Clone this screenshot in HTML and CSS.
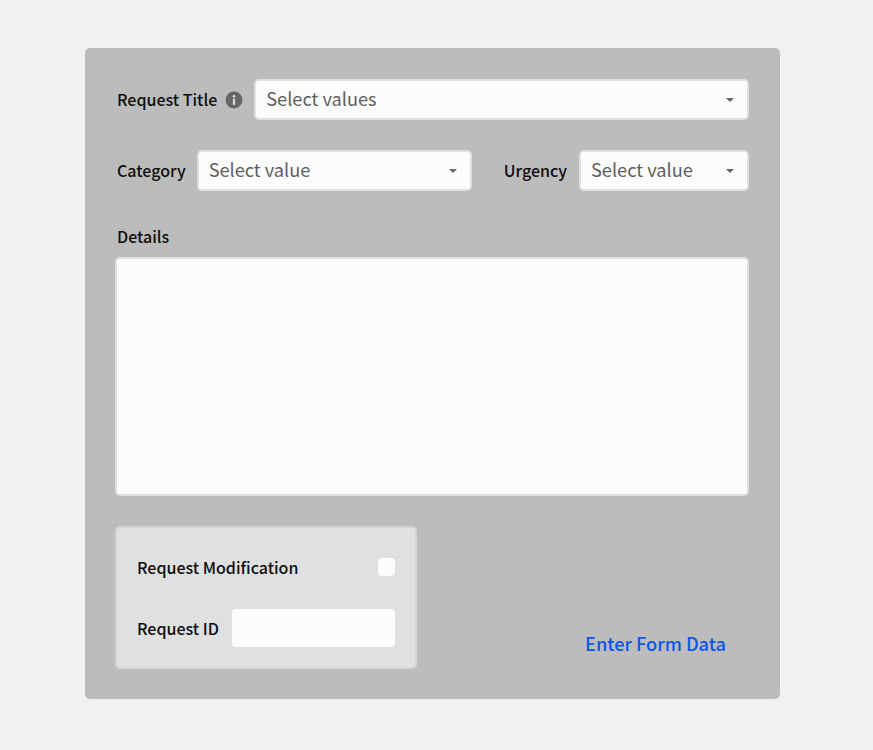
FILE: index.html
```html
<!DOCTYPE html>
<html lang="en">
<head>
    <meta charset="UTF-8">
    <meta name="viewport" content="width=device-width, initial-scale=1.0">
    <title>Request Form</title>
    <link rel="stylesheet" href="styles.css">
</head>
<body>
    <form class="panel">
        <div class="row">
            <label class="label">Request Title</label>
            <svg class="info" width="18" height="18" viewBox="0 0 18 18">
                <circle cx="9" cy="9" r="8.5" fill="#666"/>
                <circle cx="9" cy="5.2" r="1.3" fill="#dcdcdc"/>
                <rect x="7.9" y="7.6" width="2.2" height="6.2" fill="#dcdcdc"/>
            </svg>
            <div class="select grow">
                <span>Select values</span>
                <span class="caret"></span>
            </div>
        </div>

        <div class="row row-second">
            <label class="label">Category</label>
            <div class="select grow">
                <span>Select value</span>
                <span class="caret"></span>
            </div>
            <label class="label label-urgency">Urgency</label>
            <div class="select select-small">
                <span>Select value</span>
                <span class="caret"></span>
            </div>
        </div>

        <label class="label label-details">Details</label>
        <div class="details"></div>

        <div class="bottom">
            <div class="modify">
                <div class="modify-row">
                    <label class="label">Request Modification</label>
                    <span class="checkbox"></span>
                </div>
                <div class="modify-row modify-id">
                    <label class="label">Request ID</label>
                    <div class="id-input"></div>
                </div>
            </div>
            <a href="#" class="submit">Enter Form Data</a>
        </div>
    </form>
</body>
</html>
```

FILE: styles.css
```css
body {
    font-family: "Noto Sans CJK JP", "Noto Sans", sans-serif;
    margin: 0;
    padding: 48px 93px 51px 85px;
    background-color: #f1f1f1;
}
.panel {
    display: block;
    height: 651px;
    box-sizing: border-box;
    padding: 31px 31px 30px 30px;
    background-color: #bcbcbc;
    border-radius: 5px;
}
.row {
    display: flex;
    align-items: center;
}
.row-second {
    margin-top: 30px;
}
.label {
    color: #0d0d0d;
    font-size: 16px;
    font-weight: 500;
    line-height: 22px;
    padding-bottom: 2px;
    white-space: nowrap;
    margin-left: 2px;
}
.info {
    margin-left: 8px;
    margin-right: 11px;
    flex-shrink: 0;
}
.select {
    display: flex;
    align-items: center;
    justify-content: space-between;
    box-sizing: border-box;
    height: 41px;
    padding: 0 13px 4px 10px;
    background-color: #fcfcfc;
    border: 2px solid #e0e0e0;
    border-radius: 5px;
    color: #5e5e5e;
    font-size: 18.2px;
}
.grow {
    flex: 1;
}
.row-second .grow {
    margin-left: 11px;
}
.select-small {
    width: 170px;
    margin-left: 12px;
}
.label-urgency {
    margin-left: 32px;
}
.caret {
    width: 0;
    height: 0;
    margin-top: 4px;
    border-left: 4.5px solid transparent;
    border-right: 4.5px solid transparent;
    border-top: 4.5px solid #666;
}
.label-details {
    display: block;
    margin-top: 34px;
}
.details {
    box-sizing: border-box;
    height: 239px;
    margin-top: 8px;
    background-color: #fcfcfc;
    border: 2px solid #e0e0e0;
    border-radius: 5px;
}
.bottom {
    display: flex;
    justify-content: space-between;
    align-items: flex-end;
    margin-top: 30px;
}
.modify {
    box-sizing: border-box;
    width: 302px;
    height: 143px;
    padding: 21px 20px 20px 20px;
    background-color: #e0e0e0;
    border: 2px solid #d4d4d4;
    border-radius: 5px;
}
.modify .label {
    margin-left: 0;
    padding-bottom: 0;
}
.modify-row {
    display: flex;
    align-items: center;
    justify-content: space-between;
    height: 36px;
}
.modify-id {
    height: 38px;
    margin-top: 24px;
}
.checkbox {
    width: 17px;
    height: 18px;
    background-color: #fcfcfc;
    border-radius: 4px;
}
.id-input {
    width: 163px;
    height: 38px;
    background-color: #fcfcfc;
    border-radius: 4px;
}
.submit {
    margin-right: 23px;
    margin-bottom: 14px;
    color: #0a55ee;
    font-size: 18.2px;
    font-weight: 500;
    line-height: 24px;
    text-decoration: none;
}
```
